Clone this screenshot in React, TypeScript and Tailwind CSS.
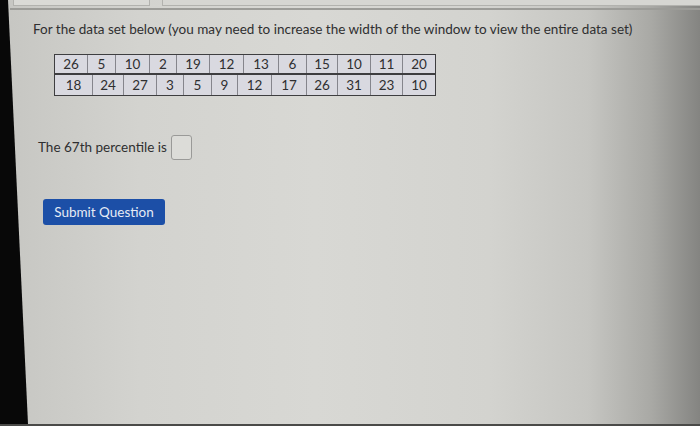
import React from 'react';

const topRow: [number, number][] = [
  [26, 33], [5, 28], [10, 34], [2, 27], [19, 33], [12, 34],
  [13, 35], [6, 28], [15, 31], [10, 33], [11, 32], [20, 32],
];

const bottomRow: [number, number][] = [
  [18, 38], [24, 31], [27, 33], [3, 27], [5, 28], [9, 26],
  [12, 34], [17, 35], [26, 31], [31, 33], [23, 32], [10, 32],
];

function DataRow({ cells, divider }: { cells: [number, number][]; divider?: boolean }) {
  return (
    <div className={`flex h-[20px] ${divider ? 'border-b-2 border-[#3e3e40]' : ''}`}>
      {cells.map(([v, w], i) => (
        <div
          key={i}
          style={{ width: w }}
          className={`flex items-center justify-center bg-[#d9d9e0] text-[13.5px] ${
            i < cells.length - 1 ? 'border-r border-[#85858c]' : ''
          }`}
        >
          {v}
        </div>
      ))}
    </div>
  );
}

export default function App() {
  return (
    <div className="relative h-[426px] w-[700px] overflow-hidden border-b-2 border-[#4a4a48] bg-[linear-gradient(to_right,#c6c6c2_0%,#d3d3cf_20%,#d8d8d4_45%,#d3d3cf_70%,#c6c6c2_84%,#a9a9a5_93%,#848481_100%)] font-['Lato',sans-serif] text-[#2f2f30]">
      {/* top toolbar remnants */}
      <div className="flex h-[8px] gap-[12px] pl-[13px]">
        <div className="h-[6px] w-[137px] border-x border-b border-[#b2b2ae] bg-[#dadad6]" />
        <div className="h-[6px] flex-1 border-l border-b border-[#b2b2ae] bg-[#d6d6d2]" />
      </div>
      <div className="ml-[10px] h-[2px] bg-[#9c9c98]" />

      <div className="pl-[33px] pt-[11px] text-[13.5px] leading-[16px]">
        For the data set below (you may need to increase the width of the window to view the entire data set)
      </div>

      <div className="ml-[54px] mt-[17px] w-fit border border-[#3e3e40]">
        <DataRow cells={topRow} divider />
        <DataRow cells={bottomRow} />
      </div>

      <div className="ml-[38px] mt-[39px] flex items-center gap-[4px] text-[13.5px]">
        <span>The 67th percentile is</span>
        <div className="h-[25px] w-[21px] rounded-[3px] border border-[#9a9a98] bg-[#dcdcd8]" />
      </div>

      <button className="ml-[43px] mt-[39px] h-[26px] w-[122px] rounded-[3px] bg-[#1c4fa7] text-[13.5px] text-[#e6ebf5]">
        Submit Question
      </button>

      {/* monitor bezel */}
      <div className="absolute inset-y-0 left-0 w-[28px] bg-[#080808] [clip-path:polygon(0_0,8px_0,28px_100%,0_100%)]" />
    </div>
  );
}
